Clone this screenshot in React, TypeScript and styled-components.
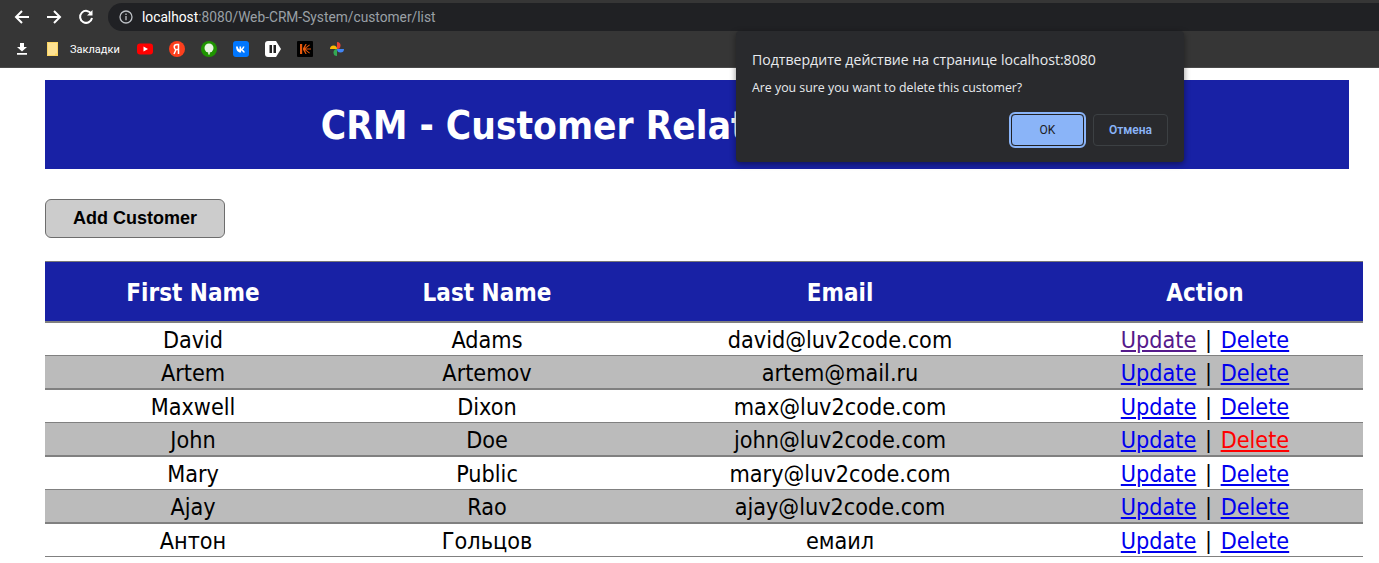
import React from 'react'
import styled, { createGlobalStyle } from 'styled-components'

const GlobalStyle = createGlobalStyle`
  html, body {
    margin: 0;
    padding: 0;
    background: #fff;
    overflow: hidden;
  }
`

const Page = styled.div`
  position: relative;
  width: 1379px;
  height: 563px;
  overflow: hidden;
  font-family: 'DejaVu Sans', Verdana, sans-serif;
  font-stretch: condensed;
`

const TopBar = styled.div`
  height: 34px;
  background: #363636;
  display: flex;
  align-items: center;
  padding-left: 12px;
  box-sizing: border-box;
`

const NavButton = styled.div`
  width: 20px;
  height: 20px;
  margin-right: 12px;
  display: flex;
  align-items: center;
  justify-content: center;
`

const AddressBar = styled.div`
  flex: 1;
  height: 28px;
  background: #202124;
  border-radius: 14px 0 0 14px;
  display: flex;
  align-items: center;
  padding-left: 11px;
  font: 13.75px 'Roboto', sans-serif;
  color: #9aa0a6;
`

const Host = styled.span`
  color: #fff;
`

const InfoIcon = styled.div`
  width: 14px;
  height: 14px;
  margin-right: 9px;
  display: flex;
`

const BookmarkBar = styled.div`
  height: 34px;
  background: #363636;
  border-bottom: 1px solid #4a4a4a;
  box-sizing: border-box;
  display: flex;
  align-items: center;
  padding: 0 0 3px 14px;
`

const BookmarkLabel = styled.span`
  font: 11px 'Roboto', sans-serif;
  color: #fff;
  margin: 0 17px 0 10px;
`

const BookmarkIcon = styled.div`
  width: 16px;
  height: 16px;
  margin-right: 16px;
  display: flex;
`

const Content = styled.main`
  padding: 12px 16px 0 45px;
`

const Banner = styled.div`
  width: 1304px;
  height: 89px;
  box-sizing: border-box;
  padding-top: 2px;
  background: #1821a5;
  color: #fff;
  display: flex;
  align-items: center;
  justify-content: center;
  font-size: 38.5px;
  font-weight: 700;
`

const AddButton = styled.button`
  display: block;
  width: 180px;
  height: 39px;
  margin: 30px 0 23px;
  padding: 0;
  background: #cccccc;
  border: 1px solid #6d6d6d;
  border-radius: 6px;
  color: #000;
  font: 700 18px 'Liberation Sans', Arial, sans-serif;
`

const Table = styled.table`
  width: 1318px;
  border-collapse: separate;
  border-spacing: 0;
  table-layout: fixed;
  color: #000;
`

const HeadCell = styled.th<{ $w: number }>`
  width: ${p => p.$w}px;
  height: 62px;
  box-sizing: border-box;
  padding: 2px 0 0;
  background: #1821a5;
  color: #fff;
  font-size: 24px;
  font-weight: 700;
  text-align: center;
  border-top: 1px solid #777;
  border-bottom: 2px solid #808080;
`

const Row = styled.tr<{ $even: boolean }>`
  background: ${p => (p.$even ? '#bbbbbb' : '#fff')};
`

const Cell = styled.td<{ $even: boolean }>`
  height: ${p => (p.$even ? 34 : 33)}px;
  box-sizing: border-box;
  padding: 1px 0 0;
  font-size: 23.2px;
  line-height: 28px;
  text-align: center;
  border-bottom: ${p => (p.$even ? 2 : 1)}px solid #808080;
`

const Link = styled.a<{ $state?: 'visited' | 'active' }>`
  color: ${p => (p.$state === 'visited' ? '#551a8b' : p.$state === 'active' ? '#ff0000' : '#0000ee')};
  text-decoration: underline;
  cursor: pointer;
`

const Separator = styled.span`
  margin: 0 2px;
`

const Dialog = styled.div`
  position: absolute;
  top: 31px;
  left: 736px;
  width: 448px;
  height: 131px;
  box-sizing: border-box;
  padding: 20px 16px 0;
  background: #292a2d;
  border-radius: 4px;
  box-shadow: 0 2px 6px rgba(0, 0, 0, 0.45);
  font-family: 'Open Sans', sans-serif;
  font-stretch: normal;
  color: #e8eaed;
`

const DialogTitle = styled.div`
  font-size: 14.1px;
  line-height: 18px;
`

const DialogText = styled.div`
  font-size: 12.35px;
  line-height: 16px;
  margin-top: 11px;
`

const DialogActions = styled.div`
  display: flex;
  justify-content: flex-end;
  gap: 9px;
  margin-top: 18px;
`

const DialogButton = styled.button<{ $primary?: boolean }>`
  width: ${p => (p.$primary ? 73 : 75)}px;
  height: 32px;
  padding: 0;
  border-radius: 4px;
  font: ${p => (p.$primary ? 400 : 600)} 12px 'Roboto', sans-serif;
  background: ${p => (p.$primary ? '#8ab4f8' : 'transparent')};
  color: ${p => (p.$primary ? '#202124' : '#8ab4f8')};
  border: 1px solid ${p => (p.$primary ? '#202124' : '#3c4043')};
  outline: ${p => (p.$primary ? '2px solid #8ab4f8' : 'none')};
`

const customers = [
  ['David', 'Adams', 'david@luv2code.com'],
  ['Artem', 'Artemov', 'artem@mail.ru'],
  ['Maxwell', 'Dixon', 'max@luv2code.com'],
  ['John', 'Doe', 'john@luv2code.com'],
  ['Mary', 'Public', 'mary@luv2code.com'],
  ['Ajay', 'Rao', 'ajay@luv2code.com'],
  ['Антон', 'Гольцов', 'емаил'],
]

const columns: [string, number][] = [
  ['First Name', 296],
  ['Last Name', 292],
  ['Email', 414],
  ['Action', 316],
]

const Favicon = ({ children }: { children: React.ReactNode }) => (
  <BookmarkIcon>
    <svg width="16" height="16" viewBox="0 0 16 16">{children}</svg>
  </BookmarkIcon>
)

const App = () => (
  <Page>
    <GlobalStyle />
    <TopBar>
      <NavButton>
        <svg width="16" height="16" viewBox="0 0 16 16" fill="none" stroke="#fff" strokeWidth="2">
          <path d="M15 8H2M8 2L2 8l6 6" />
        </svg>
      </NavButton>
      <NavButton>
        <svg width="16" height="16" viewBox="0 0 16 16" fill="none" stroke="#fff" strokeWidth="2">
          <path d="M1 8h13M8 2l6 6-6 6" />
        </svg>
      </NavButton>
      <NavButton>
        <svg width="16" height="16" viewBox="0 0 16 16" fill="none" stroke="#fff" strokeWidth="2">
          <path d="M13.4 5A6 6 0 1 0 14 9" />
          <path d="M14.5 1v5.5H9" fill="#fff" stroke="none" />
        </svg>
      </NavButton>
      <AddressBar>
        <InfoIcon>
          <svg width="14" height="14" viewBox="0 0 14 14" fill="none" stroke="#bdc1c6" strokeWidth="1.3">
            <circle cx="7" cy="7" r="6" />
            <path d="M7 6v4.2M7 3.6v1.4" />
          </svg>
        </InfoIcon>
        <Host>localhost</Host>:8080/Web-CRM-System/customer/list
      </AddressBar>
    </TopBar>
    <BookmarkBar>
      <BookmarkIcon>
        <svg width="16" height="16" viewBox="0 0 16 16" fill="#fff">
          <path d="M6 2h4v4h3l-5 4.500L3 6h3zM3 12h10v1.800H3z" />
        </svg>
      </BookmarkIcon>
      <svg width="14" height="16" viewBox="0 0 14 16">
        <path d="M1 1h11v14H1z" fill="#fdd663" />
        <path d="M2 2h9v10.500H9V14H2z" fill="#fde293" />
      </svg>
      <BookmarkLabel>Закладки</BookmarkLabel>
      <Favicon>
        <rect y="2.500" width="16" height="11" rx="3" fill="#f00" />
        <path d="M6.500 5.500v5L11 8z" fill="#fff" />
      </Favicon>
      <Favicon>
        <circle cx="8" cy="8" r="8" fill="#fc3f1d" />
        <path d="M9.500 13V3.500H8C6.200 3.500 5.200 4.500 5.200 6c0 1.300.6 2 1.700 2.800L5 13M9.500 8.500H7.500" fill="none" stroke="#fff" strokeWidth="1.500" />
      </Favicon>
      <Favicon>
        <circle cx="8" cy="8" r="8" fill="#1f9400" />
        <circle cx="8" cy="7" r="4.500" fill="#e8f5e0" />
        <path d="M7.200 11h1.600v2.500H7.200z" fill="#e8f5e0" />
      </Favicon>
      <Favicon>
        <rect width="16" height="16" rx="3" fill="#0077ff" />
        <path d="M3 5.500h1.800c.2 1.800 1 2.800 1.700 3V5.500h1.600v2.300c.8-.1 1.500-1.100 1.800-2.300h1.600c-.3 1.500-1.200 2.600-2 3.100.8.400 1.900 1.400 2.400 2.900h-1.800c-.4-1.100-1.200-2-2-2.100v2.100h-.4C4.700 11.500 3.200 9.300 3 5.500z" fill="#fff" />
      </Favicon>
      <Favicon>
        <path d="M3 0h8l5 8-5 8H3a3 3 0 0 1-3-3V3a3 3 0 0 1 3-3z" fill="#fff" />
        <path d="M4.500 4h2.500v8H4.500zM8.500 4H11v8H8.500z" fill="#222" />
      </Favicon>
      <Favicon>
        <rect width="16" height="16" rx="1" fill="#000" />
        <path d="M3 3h2.200v10H3zM6 7.200L8.500 3h1.200L7.800 7l4.500-3.500.6.800L8.600 7.500H14v1H8.600l4.300 3.200-.6.800L7.800 9l1.900 4H8.500L6 8.800z" fill="#e8590c" />
      </Favicon>
      <Favicon>
        <path d="M8 8V1a3.500 3.500 0 0 1 0 7z" fill="#ea4335" />
        <path d="M8 8h7a3.500 3.500 0 0 1-7 0z" fill="#4285f4" />
        <path d="M8 8v7a3.500 3.500 0 0 1 0-7z" fill="#34a853" />
        <path d="M8 8H1a3.500 3.500 0 0 1 7 0z" fill="#fbbc04" />
      </Favicon>
    </BookmarkBar>
    <Content>
      <Banner>CRM - Customer Relationship Manager</Banner>
      <AddButton>Add Customer</AddButton>
      <Table>
        <thead>
          <tr>
            {columns.map(([name, w]) => (
              <HeadCell key={name} $w={w}>{name}</HeadCell>
            ))}
          </tr>
        </thead>
        <tbody>
          {customers.map((c, i) => {
            const even = i % 2 === 1
            return (
              <Row key={c[2]} $even={even}>
                {c.map(v => (
                  <Cell key={v} $even={even}>{v}</Cell>
                ))}
                <Cell $even={even}>
                  <Link $state={i === 0 ? 'visited' : undefined}>Update</Link>
                  <Separator>{' | '}</Separator>
                  <Link $state={i === 3 ? 'active' : undefined}>Delete</Link>
                </Cell>
              </Row>
            )
          })}
        </tbody>
      </Table>
    </Content>
    <Dialog>
      <DialogTitle>Подтвердите действие на странице localhost:8080</DialogTitle>
      <DialogText>Are you sure you want to delete this customer?</DialogText>
      <DialogActions>
        <DialogButton $primary>OK</DialogButton>
        <DialogButton>Отмена</DialogButton>
      </DialogActions>
    </Dialog>
  </Page>
)

export default App
